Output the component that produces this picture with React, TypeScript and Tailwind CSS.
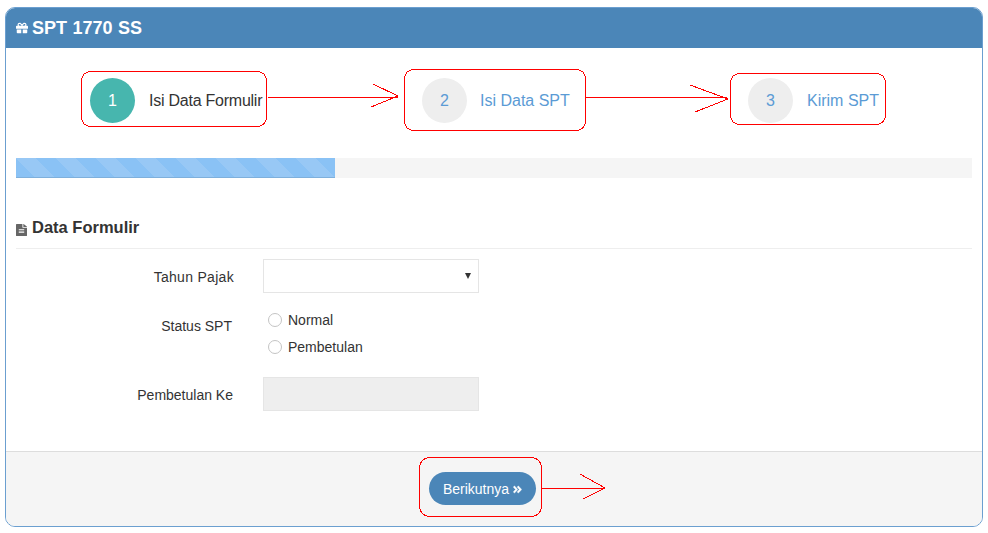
import { FaAngleDoubleRight, FaFileAlt, FaGift } from "react-icons/fa";

const steps = [
  { no: "1", label: "Isi Data Formulir", active: true, width: "w-[332px]", text: "text-[16px] tracking-[-0.24px] text-[#333]" },
  { no: "2", label: "Isi Data SPT", active: false, width: "w-[326px]", text: "text-[16px] -ml-px text-[#5b9bd5]" },
  { no: "3", label: "Kirim SPT", active: false, width: "w-[180px]", text: "text-[16px] text-[#5b9bd5]" },
];

const Annotations = () => {
  return (
    <svg
      className="absolute left-0 top-0 pointer-events-none"
      width="988"
      height="533"
      fill="none"
      stroke="#f00"
      strokeWidth="1"
      shapeRendering="crispEdges"
    >
      {/* boxes drawn over the screen */}
      <rect x="81.5" y="71.5" width="185" height="55" rx="9" />
      <rect x="404.5" y="69.5" width="181" height="61" rx="9" />
      <rect x="730.5" y="73.5" width="155" height="51" rx="9" />
      <rect x="419.5" y="457.5" width="122" height="59" rx="10" />

      {/* arrows */}
      <path d="M268 97.5H398M373 84L398 96L371 107" />
      <path d="M586 97.5H727M690 85L728 99L695 112" />
      <path d="M541 488.5H605M580 474L605 488L583 499" />
    </svg>
  );
};

const App = () => {
  return (
    <div className="relative w-[988px] h-[533px] bg-white pt-[7px] px-[5px] font-['Liberation_Sans',Arial,sans-serif] text-[#333] overflow-hidden">
      <div className="w-[978px] h-[520px] flex flex-col rounded-[10px] border border-[#6b9fd0] overflow-hidden bg-white">
        {/* Header */}
        <div className="h-[41px] -mt-px -mx-px bg-[#4b86b8] text-white flex items-center pl-[11px] gap-[4px] shrink-0">
          <FaGift className="w-[12px] h-[12px]" />
          <h3 className="text-[18px] font-bold leading-none [word-spacing:0.5px]">SPT 1770 SS</h3>
        </div>

        <div className="flex-1 px-[10px]">
          {/* Steps */}
          <div className="flex pl-[74px] pt-[30px]">
            {steps.map((s) => (
              <div key={s.no} className={`${s.width} flex items-center gap-[14px] shrink-0`}>
                <div
                  className={
                    s.active
                      ? "w-[45px] h-[45px] rounded-full bg-[#47b6ae] text-white flex items-center justify-center text-[16px]"
                      : "w-[45px] h-[45px] rounded-full bg-[#eee] text-[#5b9bd5] flex items-center justify-center text-[16px]"
                  }
                >
                  {s.no}
                </div>
                <span className={s.text}>{s.label}</span>
              </div>
            ))}
          </div>

          {/* Progress */}
          <div className="mt-[35px] h-[20px] bg-[#f5f5f5]">
            <div className="w-[319px] h-[20px] border-b border-[#7fb0dc] bg-[#8ac2f5] bg-[linear-gradient(45deg,#98c8f5_25%,transparent_25%,transparent_50%,#98c8f5_50%,#98c8f5_75%,transparent_75%,transparent)] bg-[length:40px_40px]" />
          </div>

          {/* Data Formulir */}
          <div className="mt-[38px] h-[33px] border-b border-[#eee] flex items-start gap-[5px]">
            <FaFileAlt preserveAspectRatio="none" className="w-[11px] h-[12px] mt-[8px] text-[#666]" />
            <h4 className="text-[16.5px] font-bold leading-[23px] text-[#333]">Data Formulir</h4>
          </div>

          <div className="mt-[10px] flex items-center h-[34px]">
            <label className="w-[218px] text-right text-[14px] tracking-[0.3px] pt-[2px]">Tahun Pajak</label>
            <div className="relative ml-[29px] w-[216px] h-[34px] border border-[#e5e5e5] bg-white">
              <svg className="absolute right-[7px] top-[13px]" width="6" height="6" viewBox="0 0 6 6">
                <path d="M0 0H6L3 6Z" fill="#333" />
              </svg>
            </div>
          </div>

          <div className="mt-[14px] flex h-[54px]">
            <label className="w-[216px] text-right text-[14px] pt-[9px] leading-[20px]">Status SPT</label>
            <div className="ml-[36px] flex flex-col">
              <div className="h-[27px] flex items-center gap-[6px] -mt-[1px]">
                <span className="w-[14px] h-[14px] rounded-full border border-[#c4c4c4] bg-white" />
                <span className="text-[14px] pt-[2px]">Normal</span>
              </div>
              <div className="h-[27px] flex items-center gap-[6px]">
                <span className="w-[14px] h-[14px] rounded-full border border-[#c4c4c4] bg-white" />
                <span className="text-[14px] pt-[2px]">Pembetulan</span>
              </div>
            </div>
          </div>

          <div className="mt-[16px] flex items-center h-[34px]">
            <label className="w-[217px] text-right text-[14px] pt-[2px]">Pembetulan Ke</label>
            <div className="ml-[30px] w-[216px] h-[34px] border border-[#e5e5e5] bg-[#eee]" />
          </div>
        </div>

        {/* Footer */}
        <div className="h-[75px] shrink-0 bg-[#f5f5f5] border-t border-[#ddd] flex justify-center items-start pt-[20px] pr-[23px]">
          <button className="w-[107px] h-[33px] rounded-full bg-[#4b86b8] text-white text-[14px] pt-[1px] flex items-center justify-center gap-[4px]">
            Berikutnya
            <FaAngleDoubleRight preserveAspectRatio="none" className="w-[9px] h-[11px] stroke-white stroke-[24]" />
          </button>
        </div>
      </div>
      <Annotations />
    </div>
  );
};

export default App;
